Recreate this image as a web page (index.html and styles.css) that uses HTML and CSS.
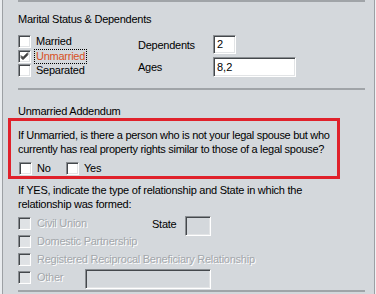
FILE: index.html
```html
<!DOCTYPE html>
<html>
<head>
<meta charset="utf-8">
<link rel="stylesheet" href="styles.css">
</head>
<body>
<div class="frame">
  <div class="sep"></div>
  <div class="heading first">Marital Status &amp; Dependents</div>
  <div class="status">
    <div class="checks">
      <div class="cb r1"><span class="box"></span><span class="lbl">Married</span></div>
      <div class="cb r2"><span class="box"><svg class="tick" width="13" height="13" viewBox="0 0 13 13"><path d="M3 5.5 L5 7.5 L10 2.5 M3 6.5 L5 8.5 L10 3.5 M3 7.5 L5 9.5 L10 4.5" fill="none" stroke="#000" stroke-width="1"/></svg></span><span class="lbl focus red">Unmarried</span></div>
      <div class="cb r3"><span class="box"></span><span class="lbl">Separated</span></div>
    </div>
    <div class="fields">
      <span class="flabel">Dependents</span><span class="input dep">2</span>
      <span class="flabel">Ages</span><span class="input ages">8,2</span>
    </div>
  </div>
  <div class="sep sep2"></div>
  <div class="heading second">Unmarried Addendum</div>
  <div class="redbox">
    <p class="question">If Unmarried, is there a person who is not your legal spouse but who<br>currently has real property rights similar to those of a legal spouse?</p>
    <div class="yesno">
      <div class="cb no"><span class="box"></span><span class="lbl">No</span></div>
      <div class="cb yes"><span class="box"></span><span class="lbl">Yes</span></div>
    </div>
  </div>
  <p class="ifyes">If YES, indicate the type of relationship and State in which the<br>relationship was formed:</p>
  <div class="rels">
    <div class="rel">
      <div class="cb dis"><span class="box"></span><span class="lbl civil">Civil Union</span></div>
      <span class="statelbl">State</span><span class="input off state"></span>
    </div>
    <div class="rel">
      <div class="cb dis"><span class="box"></span><span class="lbl">Domestic Partnership</span></div>
    </div>
    <div class="rel">
      <div class="cb dis"><span class="box"></span><span class="lbl">Registered Reciprocal Beneficiary Relationship</span></div>
    </div>
    <div class="rel">
      <div class="cb dis"><span class="box"></span><span class="lbl other">Other</span></div>
      <span class="input off otherin"></span>
    </div>
  </div>
  <div class="sep sep3"></div>
</div>
</body>
</html>
```

FILE: styles.css
```css
html, body {
  margin: 0;
  padding: 0;
}
body {
  width: 376px;
  height: 294px;
  overflow: hidden;
  background: #d4d8dc;
  font-family: "Liberation Sans", Arial, sans-serif;
  font-size: 11px;
  color: #000;
}
.frame {
  box-sizing: border-box;
  width: 376px;
  height: 294px;
  padding: 0 11px 0 18px;
  box-shadow: inset 2px 0 0 #e9ecef, inset 3px 0 0 #9ca0a4, inset -1px 0 0 #eef0f2, inset -2px 0 0 #9ca0a4;
  overflow: hidden;
}
.sep {
  height: 2px;
  background: #a0a4a8;
}
.heading {
  height: 13px;
  line-height: 13px;
  letter-spacing: -0.25px;
}
.heading.first { margin-top: 11px; }
.heading.second { margin-top: 15px; }
.status {
  display: flex;
  margin-top: 9px;
}
.checks {
  width: 120px;
  display: flex;
  flex-direction: column;
}
.cb {
  display: flex;
  align-items: center;
  height: 13px;
}
.cb.r1 { margin-bottom: 2px; }
.cb.r2 { margin-bottom: 1px; }
.box {
  position: relative;
  box-sizing: border-box;
  width: 13px;
  height: 13px;
  flex: none;
  background: #fff;
  border-top: 1px solid #8a8e92;
  border-left: 1px solid #8a8e92;
  border-bottom: 1px solid #fff;
  border-right: 1px solid #fff;
  box-shadow: inset 1px 1px 0 #44484c, inset -1px -1px 0 #e2e4e6;
}
.tick {
  position: absolute;
  left: -1px;
  top: -1px;
}
.lbl {
  margin-left: 5px;
  line-height: 13px;
  letter-spacing: -0.25px;
  white-space: nowrap;
}
.red { color: #d8501e; }
.focus {
  outline: 1px dotted #000;
  outline-offset: 0;
  padding: 0 1px;
  margin-left: 4px;
}
.fields {
  display: grid;
  grid-template-columns: 75px auto;
  grid-template-rows: 19px 20px;
  row-gap: 3px;
  align-items: center;
  justify-items: start;
}
.flabel {
  letter-spacing: -0.25px;
}
.input {
  box-sizing: border-box;
  display: block;
  background: #fff;
  border-top: 1px solid #8a8e92;
  border-left: 1px solid #8a8e92;
  border-bottom: 1px solid #fff;
  border-right: 1px solid #fff;
  box-shadow: inset 1px 1px 0 #44484c, inset -1px -1px 0 #e2e4e6;
  padding: 0 3px;
  line-height: 17px;
}
.dep { width: 23px; height: 19px; }
.ages { width: 83px; height: 20px; line-height: 18px; }
.sep2 { margin-top: 11px; }
.redbox {
  box-sizing: border-box;
  width: 332px;
  margin-left: -10px;
  border: 3px solid #e0212b;
  padding: 7px 0 1px 7px;
}
.question {
  margin: 0;
  line-height: 14px;
  letter-spacing: -0.3px;
  white-space: nowrap;
}
.yesno {
  display: flex;
  margin-top: 6px;
  padding-left: 1px;
}
.cb.no { width: 47px; }
.ifyes {
  margin: 4px 0 0 0;
  line-height: 14px;
  letter-spacing: -0.25px;
  white-space: nowrap;
}
.rels {
  margin-top: 6px;
}
.rel {
  display: flex;
  align-items: flex-start;
  height: 18px;
}
.cb.dis .box {
  background: #dfe2e5;
}
.cb.dis .lbl {
  margin-left: 6px;
  color: #a3a7ab;
  text-shadow: 1px 1px 0 #fff;
}
.civil { width: 115px; }
.statelbl {
  line-height: 13px;
  margin-top: 1px;
  width: 33px;
  letter-spacing: -0.25px;
}
.input.off {
  background: #d4d8dc;
}
.state {
  width: 26px;
  height: 20px;
  margin-top: -1px;
}
.other { width: 48px; }
.otherin {
  width: 126px;
  height: 20px;
  margin-top: -2px;
}
.sep3 { margin-top: 1px; }
```
